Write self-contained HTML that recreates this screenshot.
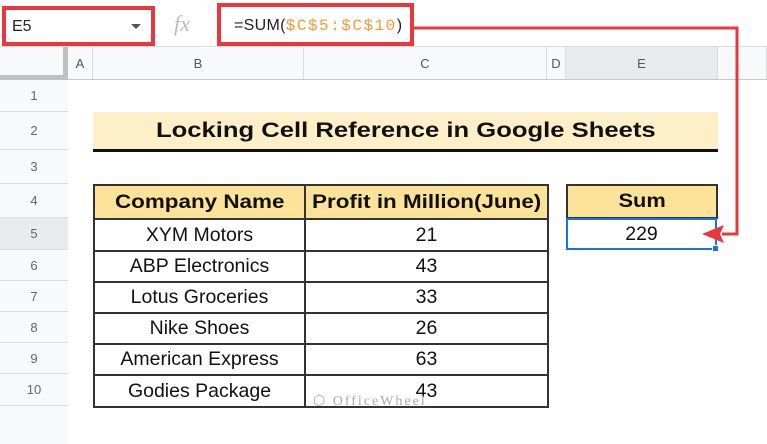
<!DOCTYPE html>
<html><head><meta charset="utf-8"><style>
*{margin:0;padding:0;box-sizing:border-box}
body{width:767px;height:444px;position:relative;background:#fff;font-family:"Liberation Sans",Arial,sans-serif;overflow:hidden}
.a{position:absolute}
.rh{position:absolute;left:0;width:68px;background:#f8f9fa;border-bottom:1px solid #dadce0;color:#666;font-size:13px;text-align:center}
.ch{position:absolute;top:47px;height:33px;background:#f8f9fa;border-right:1px solid #dadce0;color:#555;font-size:13px;text-align:center;line-height:33px}
td{border:2px solid #333;text-align:center;padding:0}
.b span{display:inline-block;transform:scaleX(1.15)}
</style></head><body>
<div class="a" style="left:0;top:0;width:767px;height:47px;background:#fff;border-bottom:1px solid #dadce0"></div>
<div class="a" style="left:2px;top:6px;width:153px;height:40px;border:4px solid #e8373d"></div>
<div class="a" style="left:12px;top:18px;font-size:16px;color:#222">E5</div>
<div class="a" style="left:131px;top:24px;width:0;height:0;border-left:5px solid transparent;border-right:5px solid transparent;border-top:5px solid #555"></div>
<div class="a" style="left:174px;top:11px;font-family:'Liberation Serif',serif;font-style:italic;font-size:22px;color:#bbb">fx</div>
<div class="a" style="left:217px;top:3px;width:197px;height:43px;border:4px solid #e8373d"></div>
<div class="a" style="left:234px;top:17px;font-size:16px;color:#222;letter-spacing:0.3px">=SUM(<span style="color:#f29a33;font-family:'Liberation Mono',monospace;font-size:16px;letter-spacing:1.5px">$C$5:$C$10</span>)</div>
<div class="a" style="left:0;top:47px;width:68px;height:33px;background:#f8f9fa;border-right:5px solid #c0c0c0;border-bottom:5px solid #c0c0c0"></div>
<div class="ch" style="left:68px;width:25px">A</div>
<div class="ch" style="left:93px;width:211px">B</div>
<div class="ch" style="left:304px;width:243px">C</div>
<div class="ch" style="left:547px;width:19px">D</div>
<div class="ch" style="left:566px;width:152px;background:#e8eaed">E</div>
<div class="ch" style="left:718px;width:49px"></div>
<div class="a" style="left:68px;top:79px;width:699px;height:1px;background:#c8c8c8"></div>
<div class="a" style="left:67px;top:80px;width:1px;height:364px;background:#c8c8c8"></div>
<div class="rh" style="top:80px;height:32px;line-height:32px">1</div>
<div class="rh" style="top:112px;height:38px;line-height:38px">2</div>
<div class="rh" style="top:150px;height:34px;line-height:34px">3</div>
<div class="rh" style="top:184px;height:34px;line-height:34px">4</div>
<div class="rh" style="top:218px;height:32px;line-height:32px;background:#e8eaed">5</div>
<div class="rh" style="top:250px;height:31px;line-height:31px">6</div>
<div class="rh" style="top:281px;height:31px;line-height:31px">7</div>
<div class="rh" style="top:312px;height:31px;line-height:31px">8</div>
<div class="rh" style="top:343px;height:31px;line-height:31px">9</div>
<div class="rh" style="top:374px;height:32px;line-height:32px">10</div>
<div class="rh" style="top:406px;height:38px;border:0"></div>
<div class="a" style="left:93px;top:112px;width:625px;height:40px;background:#fdf0c8;border-bottom:3px solid #111;text-align:center;font-weight:bold;font-size:21px;line-height:38px;color:#111"><span style="display:inline-block;transform:scaleX(1.22)">Locking Cell Reference in Google Sheets</span></div>
<table class="a" style="left:93px;top:184px;border-collapse:collapse;font-size:19.5px;color:#111">
<tr class="b" style="height:34px;background:#fde39a;font-weight:bold"><td style="width:211px"><span>Company Name</span></td><td style="width:243px"><span>Profit in Million(June)</span></td></tr>
<tr style="height:32px"><td>XYM Motors</td><td>21</td></tr>
<tr style="height:31px"><td>ABP Electronics</td><td>43</td></tr>
<tr style="height:31px"><td>Lotus Groceries</td><td>33</td></tr>
<tr style="height:31px"><td>Nike Shoes</td><td>26</td></tr>
<tr style="height:31px"><td>American Express</td><td>63</td></tr>
<tr style="height:32px"><td>Godies Package</td><td>43</td></tr>
</table>
<div class="a" style="left:566px;top:184px;width:152px;height:35px;background:#fde39a;border:2px solid #333;text-align:center;font-weight:bold;font-size:19.5px;line-height:31px;color:#111"><span style="display:inline-block;transform:scaleX(1.12)">Sum</span></div>
<div class="a" style="left:566px;top:218px;width:151px;height:32px;border:2px solid #1a73e8;text-align:center;font-size:19.5px;line-height:28px;color:#111">229</div>
<div class="a" style="left:712px;top:245px;width:7px;height:7px;background:#1a73e8;border:1px solid #fff"></div>
<div class="a" style="left:313px;top:393px;font-family:'Liberation Serif',serif;font-size:14px;color:#aaa;letter-spacing:2px">⬡ OfficeWheel</div>
<svg class="a" style="left:0;top:0" width="767" height="444">
<polyline points="414,28 737,28 737,234 722,234" fill="none" stroke="#e8373d" stroke-width="3"/>
<polygon points="702,234 724,225 720,234 724,243" fill="#e8373d"/>
</svg>
</body></html>
